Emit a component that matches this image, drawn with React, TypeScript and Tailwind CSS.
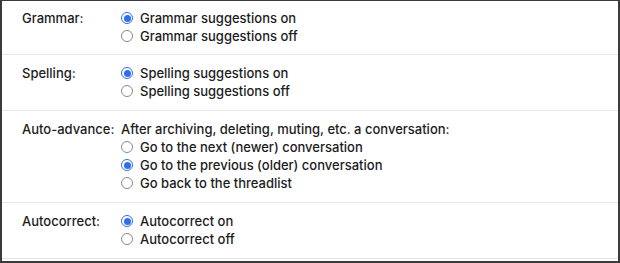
import { useState } from "react";

type Section = {
  label: string;
  intro?: string;
  name: string;
  options: string[];
  initial: number;
};

const SECTIONS: Section[] = [
  { label: "Grammar:", name: "grammar", options: ["Grammar suggestions on", "Grammar suggestions off"], initial: 0 },
  { label: "Spelling:", name: "spelling", options: ["Spelling suggestions on", "Spelling suggestions off"], initial: 0 },
  {
    label: "Auto-advance:",
    intro: "After archiving, deleting, muting, etc. a conversation:",
    name: "autoadvance",
    options: ["Go to the next (newer) conversation", "Go to the previous (older) conversation", "Go back to the threadlist"],
    initial: 1,
  },
  { label: "Autocorrect:", name: "autocorrect", options: ["Autocorrect on", "Autocorrect off"], initial: 0 },
];

function Radio({ checked }: { checked: boolean }) {
  return checked ? (
    <span className="flex h-[12px] w-[12px] shrink-0 items-center justify-center rounded-full border border-[#2f6fe8] bg-white">
      <span className="h-[7px] w-[7px] rounded-full bg-[#2f6fe8]" />
    </span>
  ) : (
    <span className="h-[12px] w-[12px] shrink-0 rounded-full border border-[#8a8a8a] bg-white" />
  );
}

function SettingRow({ s }: { s: Section }) {
  const [value, setValue] = useState(s.initial);
  return (
    <div className="flex border-b border-[#e6e6e6] pt-[9px] pb-[10px] pl-[19px] first:pt-[8px] first:pb-[9px]">
      <div className="w-[100px] shrink-0 pl-[1px]">{s.label}</div>
      <div className="flex flex-col">
        {s.intro && <div>{s.intro}</div>}
        {s.options.map((o, i) => (
          <label key={o} className="flex cursor-pointer items-center gap-[7px]" onClick={() => setValue(i)}>
            <Radio checked={value === i} />
            <span>{o}</span>
          </label>
        ))}
      </div>
    </div>
  );
}

export default function App() {
  return (
    <div className="h-[263px] w-[620px] overflow-hidden border-t border-r-2 border-b-2 border-l-2 border-[#3a3a3a] bg-white font-['Inter',sans-serif] text-[13px] leading-[18px] font-medium text-[#1c1c1c]">
      <div className="flex flex-col">
        {SECTIONS.map((s) => (
          <SettingRow key={s.name} s={s} />
        ))}
      </div>
    </div>
  );
}
